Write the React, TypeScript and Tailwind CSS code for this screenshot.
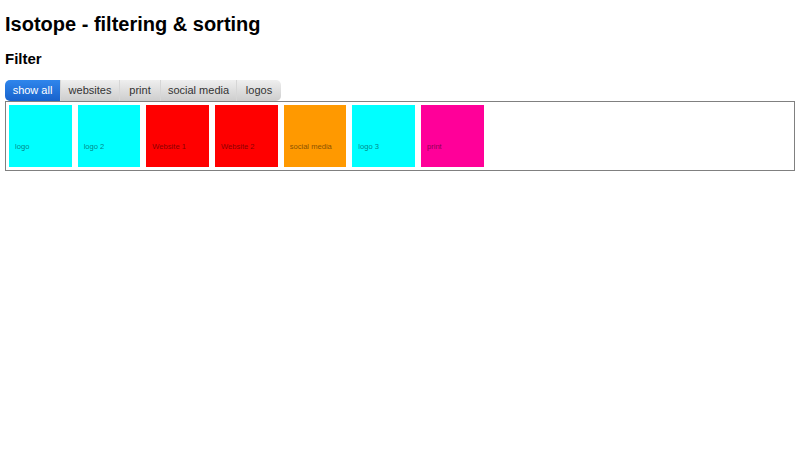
import React from "react";

const tabs = [
  { label: "show all", w: "w-[56px]", active: true },
  { label: "websites", w: "w-[59px]" },
  { label: "print", w: "w-[41px]" },
  { label: "social media", w: "w-[76px]" },
  { label: "logos", w: "w-[44px]" },
];

const items = [
  { label: "logo", bg: "bg-[#00ffff]" },
  { label: "logo 2", bg: "bg-[#00ffff]" },
  { label: "Website 1", bg: "bg-[#ff0000]" },
  { label: "Website 2", bg: "bg-[#ff0000]" },
  { label: "social media", bg: "bg-[#ff9900]" },
  { label: "logo 3", bg: "bg-[#00ffff]" },
  { label: "print", bg: "bg-[#ff0099]" },
];

export default function App() {
  return (
    <div className="w-[800px] h-[450px] bg-white px-[5px] text-black font-['Liberation_Sans',Arial,sans-serif]">
      <h1 className="pt-[13px] text-[20px] leading-[23px] font-bold">Isotope - filtering &amp; sorting</h1>
      <h2 className="mt-[14px] text-[15px] leading-[17px] font-bold">Filter</h2>
      <div className="mt-[13px] flex">
        {tabs.map((t, i) => (
          <div
            key={t.label}
            className={[
              t.w,
              "h-[21px] flex items-center justify-center text-[11px] leading-none",
              i === 0 ? "rounded-l-[5px]" : "",
              i === tabs.length - 1 ? "rounded-r-[5px]" : "border-r border-[#d6d6d6]",
              t.active
                ? "bg-gradient-to-b from-[#2f86ec] to-[#1862cc] text-white"
                : "bg-gradient-to-b from-[#efefef] to-[#cdcdcd] text-[#333]",
            ].join(" ")}
          >
            {t.label}
          </div>
        ))}
      </div>
      <div className="w-[790px] border border-[#808080] flex">
        {items.map((it) => (
          <div
            key={it.label}
            className={`${it.bg} w-[62.67px] h-[62px] m-[3px] shrink-0 pl-[6px] pt-[37px] text-[7.6px] leading-[9px] text-black/50`}
          >
            {it.label}
          </div>
        ))}
      </div>
    </div>
  );
}
